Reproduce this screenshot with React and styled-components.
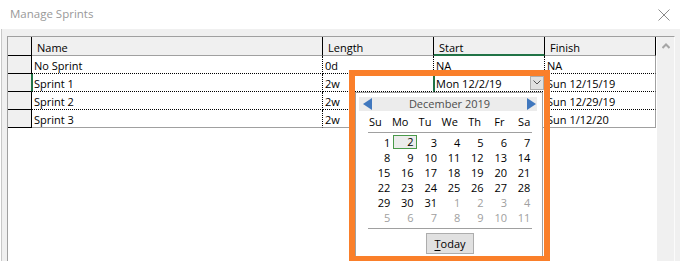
import React from 'react';
import styled, { createGlobalStyle } from 'styled-components';

const GREEN = '#217346';
const ORANGE = '#fa7f2a';

const GlobalStyle = createGlobalStyle`
  html, body { margin: 0; padding: 0; background: #fff; }
  body {
    font-family: 'Open Sans', 'Noto Sans', sans-serif;
    font-size: 11px;
    color: #000;
  }
`;

const Window = styled.div`
  position: relative;
  width: 680px;
  height: 261px;
  overflow: hidden;
  background: #fff;
  display: flex;
  flex-direction: column;
`;

const TitleBar = styled.div`
  height: 29px;
  flex: none;
  display: flex;
  align-items: center;
  justify-content: space-between;
  padding: 0 10px;
  box-sizing: border-box;
`;

const Title = styled.span`
  color: #999;
  font-size: 11.5px;
  line-height: 16px;
  margin-top: -2px;
`;

const Body = styled.div`
  flex: 1;
  display: flex;
  background: #f0f0f0;
  margin-left: 1px;
  border-left: 1px solid #c8c8c8;
  padding: 7px 0 0 5px;
`;

const GridBox = styled.div`
  width: 650px;
  background: #fff;
  border-left: 1px solid #a0a0a0;
  border-top: 1px solid #a0a0a0;
  box-sizing: border-box;
`;

const Table = styled.div`
  display: grid;
  grid-template-columns: 24px 291px 111px 111px 111px;
`;

const HeadCell = styled.div`
  height: 19px;
  box-sizing: border-box;
  background: #f0f0f0;
  border-right: 1px solid #000;
  border-bottom: ${p => p.$active ? `2px solid ${GREEN}` : p.$corner ? '1px solid #000' : '1px solid #a0a0a0'};
  padding: 3px 0 0 5px;
  line-height: 15px;
  white-space: nowrap;
`;

const RowHead = styled.div`
  height: 18px;
  box-sizing: border-box;
  background: #f0f0f0;
  border-bottom: 1px solid #000;
  border-right: 1px solid ${p => p.$active ? GREEN : '#000'};
  ${p => p.$active && `box-shadow: 1px 0 0 ${GREEN};`}
`;

const Cell = styled.div`
  height: 18px;
  box-sizing: border-box;
  display: flex;
  align-items: center;
  justify-content: space-between;
  padding: 1px 0 0 2px;
  line-height: 15px;
  white-space: nowrap;
  border-right: ${p => p.$last ? '1px solid #a0a0a0' : '1px dotted #000'};
  border-bottom: ${p => p.$bottom ? '1px solid #a0a0a0' : '1px dotted #000'};
  ${p => p.$active && `box-shadow: -1px 0 0 ${GREEN}, inset 1px 0 0 ${GREEN};`}
`;

const DropButton = styled.div`
  width: 14px;
  height: 14px;
  margin-top: -1px;
  box-sizing: border-box;
  border: 1px solid #adadad;
  background: #e1e1e1;
  display: flex;
  align-items: center;
  justify-content: center;
`;

const Scrollbar = styled.div`
  width: 17px;
  background: #f0f0f0;
  border-top: 1px solid #a0a0a0;
  border-right: 1px solid #fbfbfb;
  display: flex;
  justify-content: center;
  padding-top: 6px;
`;

const Popup = styled.div`
  position: absolute;
  left: 355px;
  top: 92px;
  width: 188px;
  height: 166px;
  box-sizing: border-box;
  background: #fff;
  border: 1px solid #a0a0a0;
  display: flex;
  flex-direction: column;
`;

const MonthBar = styled.div`
  margin: 4px 0 0 3px;
  width: 178px;
  height: 14px;
  background: #ececec;
  display: flex;
  align-items: center;
  justify-content: space-between;
  padding: 0 1px 0 4px;
  box-sizing: border-box;
`;

const MonthLabel = styled.span`
  color: #4d4d4d;
  line-height: 14px;
`;

const DayNames = styled.div`
  display: grid;
  grid-template-columns: repeat(7, 24.8px);
  margin: 3px 0 0 7px;
  height: 15px;
  line-height: 15px;
  text-align: center;
`;

const Rule = styled.div`
  margin: ${p => p.$top}px 0 0 12px;
  width: 164px;
  height: 1px;
  background: #a0a0a0;
`;

const Dates = styled.div`
  display: grid;
  grid-template-columns: repeat(7, 23.33px);
  grid-auto-rows: 15px;
  margin: 2px 0 0 14px;
`;

const Day = styled.div`
  text-align: right;
  padding-right: 3px;
  line-height: 15px;
  color: ${p => p.$muted ? '#a0a0a0' : '#000'};
  ${p => p.$today && `
    background: #ececec;
    box-shadow: inset 0 0 0 1px #4a9a4a;
    height: 14px;
    line-height: 14px;
  `}
`;

const TodayButton = styled.div`
  margin: 4px 0 0 70px;
  width: 48px;
  height: 21px;
  box-sizing: border-box;
  border: 1px solid #adadad;
  background: #e1e1e1;
  text-align: center;
  line-height: 19px;
  u { text-decoration: underline; text-underline-offset: 2px; }
`;

const Highlight = styled.div`
  position: absolute;
  left: 349px;
  top: 70px;
  width: 201px;
  height: 192px;
  box-sizing: border-box;
  border: 6px solid ${ORANGE};
  pointer-events: none;
`;

const columns = ['Name', 'Length', 'Start', 'Finish'];

const rows = [
  ['No Sprint', '0d', 'NA', 'NA'],
  ['Sprint 1', '2w', 'Mon 12/2/19', 'Sun 12/15/19'],
  ['Sprint 2', '2w', '', 'Sun 12/29/19'],
  ['Sprint 3', '2w', '', 'Sun 1/12/20'],
];

const weeks = [
  [1, 2, 3, 4, 5, 6, 7],
  [8, 9, 10, 11, 12, 13, 14],
  [15, 16, 17, 18, 19, 20, 21],
  [22, 23, 24, 25, 26, 27, 28],
  [29, 30, 31, 1, 2, 3, 4],
  [5, 6, 7, 8, 9, 10, 11],
];

const CloseIcon = () => (
  <svg width="12" height="12" viewBox="0 0 12 12">
    <path d="M0.5 0.5 L11.5 11.5 M11.5 0.5 L0.5 11.5" stroke="#8a8a8a" strokeWidth="1" />
  </svg>
);

const Chevron = () => (
  <svg width="8" height="5" viewBox="0 0 8 5">
    <path d="M0.5 0.5 L4 4 L7.5 0.5" stroke="#555" strokeWidth="1" fill="none" />
  </svg>
);

const Arrow = ({ dir }) => (
  <svg width="9" height="12" viewBox="0 0 9 12">
    <path d={dir === 'left' ? 'M9 0 L0 6 L9 12 Z' : 'M0 0 L9 6 L0 12 Z'} fill="#4178be" />
  </svg>
);

const ScrollUp = () => (
  <svg width="8" height="6" viewBox="0 0 8 6">
    <path d="M0.5 5 L4 1.5 L7.5 5" stroke="#a6a6a6" strokeWidth="2" fill="none" />
  </svg>
);

const Calendar = () => (
  <Popup>
    <MonthBar>
      <Arrow dir="left" />
      <MonthLabel>December 2019</MonthLabel>
      <Arrow dir="right" />
    </MonthBar>
    <DayNames>
      {['Su', 'Mo', 'Tu', 'We', 'Th', 'Fr', 'Sa'].map(d => <span key={d}>{d}</span>)}
    </DayNames>
    <Rule $top={3} />
    <Dates>
      {weeks.map((week, w) => week.map((d, i) => (
        <Day key={`${w}-${i}`} $muted={(w === 4 && d < 10) || w === 5} $today={w === 0 && d === 2}>{d}</Day>
      )))}
    </Dates>
    <Rule $top={3} />
    <TodayButton><u>T</u>oday</TodayButton>
  </Popup>
);

export default function App() {
  return (
    <Window>
      <GlobalStyle />
      <TitleBar>
        <Title>Manage Sprints</Title>
        <CloseIcon />
      </TitleBar>
      <Body>
        <GridBox>
          <Table>
            <HeadCell $corner />
            {columns.map(c => <HeadCell key={c} $active={c === 'Start'}>{c}</HeadCell>)}
            {rows.map((r, ri) => (
              <React.Fragment key={r[0]}>
                <RowHead $active={ri === 1} />
                {r.map((v, ci) => (
                  <Cell
                    key={ci}
                    $last={ci === 3}
                    $bottom={ri === rows.length - 1}
                    $active={ri === 1 && ci === 2}
                  >
                    <span>{v}</span>
                    {ri === 1 && ci === 2 && <DropButton><Chevron /></DropButton>}
                  </Cell>
                ))}
              </React.Fragment>
            ))}
          </Table>
        </GridBox>
        <Scrollbar><ScrollUp /></Scrollbar>
      </Body>
      <Calendar />
      <Highlight />
    </Window>
  );
}
